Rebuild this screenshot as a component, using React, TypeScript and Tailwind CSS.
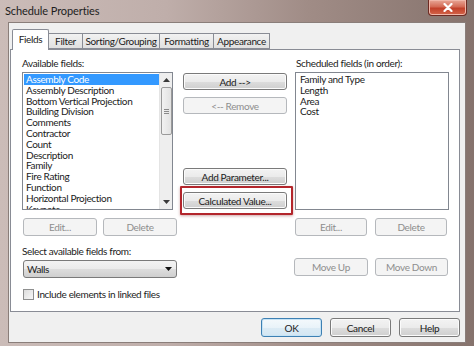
import React from 'react';

const availableFields = [
  'Assembly Code',
  'Assembly Description',
  'Bottom Vertical Projection',
  'Building Division',
  'Comments',
  'Contractor',
  'Count',
  'Description',
  'Family',
  'Fire Rating',
  'Function',
  'Horizontal Projection',
  'Keynote',
];

const scheduledFields = ['Family and Type', 'Length', 'Area', 'Cost'];

interface BtnProps {
  label: string;
  disabled?: boolean;
  primary?: boolean;
  className?: string;
}

function Btn({ label, disabled, primary, className = '' }: BtnProps) {
  const look = disabled
    ? 'border-[#b5b8bc] bg-[#f4f4f4] text-[#8e8e8e]'
    : primary
    ? 'border-[#3d80b3] bg-[linear-gradient(#f4f9fc_0%,#e9f3f9_50%,#dcebf5_51%,#d3e6f2_100%)] text-[#1b1b1b] shadow-[inset_0_0_0_1px_#c6e3f5]'
    : 'border-[#7a7a7a] bg-[linear-gradient(#f3f3f3_0%,#ebebeb_50%,#dddddd_51%,#cfcfcf_100%)] text-[#1b1b1b] shadow-[inset_0_0_0_1px_#fbfbfb]';
  return (
    <div className={`flex items-center justify-center rounded-[3px] border text-[10px] leading-none whitespace-nowrap ${look} ${className}`}>
      {label}
    </div>
  );
}

function TriUp() {
  return (
    <svg width="7" height="4" viewBox="0 0 7 4">
      <path d="M0 4 L3.5 0 L7 4 Z" fill="#3a3a3a" />
    </svg>
  );
}

function TriDown({ color = '#3a3a3a' }: { color?: string }) {
  return (
    <svg width="7" height="4" viewBox="0 0 7 4">
      <path d="M0 0 L7 0 L3.5 4 Z" fill={color} />
    </svg>
  );
}

export default function App() {
  return (
    <div className="w-[474px] h-[346px] flex flex-col overflow-hidden font-['Lato',sans-serif] tracking-[-0.35px] bg-[linear-gradient(90deg,#cbbcb8_0%,#bfaeaa_35%,#a08c86_65%,#86736d_100%)]">
      {/* Title bar */}
      <div className="h-[22px] flex items-start justify-between">
        <span className="pl-[5px] pt-[3px] text-[11px] leading-[15px] text-[#1d1d1d] tracking-[-0.1px]">
          Schedule Properties
        </span>
        <div className="mr-[7px] w-[39px] h-[16px] rounded-b-[4px] border border-t-0 border-[#6e2a22] bg-[linear-gradient(#e8a797_0%,#d46a55_45%,#c2402a_55%,#d3654a_100%)] flex items-center justify-center shadow-[inset_0_0_0_1px_#f0b6a8]">
          <svg width="10" height="9" viewBox="0 0 10 9">
            <path d="M1.5 1 L8.5 8 M8.5 1 L1.5 8" stroke="#ffffff" strokeWidth="2.2" strokeLinecap="round" />
          </svg>
        </div>
      </div>

      {/* Client area */}
      <div className="mx-[8px] mb-[3px] flex-1 flex flex-col bg-[#f0f0f0] border border-[#8a7e7a] pl-[1px] pr-[5px]">
        {/* Tabs */}
        <div className="flex items-end pl-[2px] pt-[5px] h-[26px] text-[10px] leading-none text-[#1b1b1b] whitespace-nowrap">
          <div className="relative z-10 w-[37px] h-[21px] -mb-[1px] bg-white border border-b-0 border-[#898c95] flex items-start justify-center pt-[4px] rounded-t-[2px]">
            Fields
          </div>
          <div className="w-[34px] h-[16px] bg-[linear-gradient(#f2f2f2,#e0e0e0)] border border-l-0 border-[#898c95] flex items-center justify-center">
            Filter
          </div>
          <div className="w-[77px] h-[16px] bg-[linear-gradient(#f2f2f2,#e0e0e0)] border border-l-0 border-[#898c95] flex items-center justify-center">
            Sorting/Grouping
          </div>
          <div className="w-[54px] h-[16px] bg-[linear-gradient(#f2f2f2,#e0e0e0)] border border-l-0 border-[#898c95] flex items-center justify-center">
            Formatting
          </div>
          <div className="w-[56px] h-[16px] bg-[linear-gradient(#f2f2f2,#e0e0e0)] border border-l-0 border-[#898c95] flex items-center justify-center">
            Appearance
          </div>
        </div>

        {/* Tab panel */}
        <div className="h-[263px] bg-white border border-[#898c95] flex items-start pl-[11px] pt-[7px] text-[10px] text-[#1b1b1b] whitespace-nowrap">
          {/* Left column */}
          <div className="w-[155px] flex flex-col">
            <div className="h-[12px] leading-[12px]">Available fields:</div>
            <div className="mt-[3px] w-[151px] h-[138px] border border-[#828790] flex overflow-hidden">
              <div className="flex-1 pt-[1px] pl-[1px] overflow-hidden">
                {availableFields.map((f, i) => (
                  <div
                    key={f}
                    className={`h-[10.8px] leading-[10.8px] pl-[2px] ${i === 0 ? 'bg-[#3399ff] text-white' : ''}`}
                  >
                    {f}
                  </div>
                ))}
              </div>
              <div className="w-[13px] bg-[#eeeeee] border-l border-[#e4e4e4] flex flex-col items-center">
                <div className="h-[14px] flex items-center justify-center">
                  <TriUp />
                </div>
                <div className="w-[11px] h-[48px] rounded-[2px] border border-[#9a9a9a] bg-[linear-gradient(90deg,#f2f2f2,#e2e2e2)] flex flex-col items-center justify-center gap-[1px]">
                  <div className="w-[5px] h-[1px] bg-[#8a8a8a]" />
                  <div className="w-[5px] h-[1px] bg-[#8a8a8a]" />
                  <div className="w-[5px] h-[1px] bg-[#8a8a8a]" />
                </div>
                <div className="flex-1" />
                <div className="h-[14px] flex items-center justify-center">
                  <TriDown />
                </div>
              </div>
            </div>
            <div className="mt-[8px] flex gap-[6px] pl-[1px]">
              <Btn label="Edit..." disabled className="w-[74px] h-[18px]" />
              <Btn label="Delete" disabled className="w-[74px] h-[18px]" />
            </div>
            <div className="mt-[9px] h-[12px] leading-[12px]">Select available fields from:</div>
            <div className="mt-[3px] ml-[1px] w-[154px] h-[18px] rounded-[3px] border border-[#7a7a7a] bg-[linear-gradient(#f3f3f3_0%,#ebebeb_50%,#dddddd_51%,#cfcfcf_100%)] flex items-center justify-between pl-[3px] pr-[4px]">
              <span className="leading-none">Walls</span>
              <TriDown color="#111111" />
            </div>
            <div className="mt-[11px] ml-[1px] flex items-center gap-[3px]">
              <div className="w-[11px] h-[11px] border border-[#8e8f8f] bg-[linear-gradient(135deg,#dcdcdc,#f8f8f8)]" />
              <span className="leading-[11px]">Include elements in linked files</span>
            </div>
          </div>

          {/* Middle column */}
          <div className="ml-[6px] w-[104px] flex flex-col pt-[16px]">
            <Btn label="Add -->" className="h-[17px]" />
            <Btn label="<-- Remove" disabled className="mt-[7px] h-[17px]" />
            <Btn label="Add Parameter..." className="mt-[54px] h-[17px]" />
            <div className="relative mt-[7px]">
              <Btn label="Calculated Value..." className="h-[17px]" />
              <div className="absolute -left-[3px] -right-[6px] -top-[6px] -bottom-[6px] border-2 border-[#b3262c] rounded-[1px] shadow-[0_1px_3px_rgba(120,0,0,0.35)]" />
            </div>
          </div>

          {/* Right column */}
          <div className="ml-[8px] w-[154px] flex flex-col">
            <div className="h-[12px] leading-[12px] pl-[1px]">Scheduled fields (in order):</div>
            <div className="mt-[3px] w-[154px] h-[138px] border border-[#828790] pt-[1px] pl-[4px]">
              {scheduledFields.map((f) => (
                <div key={f} className="h-[10.8px] leading-[10.8px]">
                  {f}
                </div>
              ))}
            </div>
            <div className="mt-[8px] flex gap-[8px]">
              <Btn label="Edit..." disabled className="w-[72px] h-[18px]" />
              <Btn label="Delete" disabled className="w-[72px] h-[18px]" />
            </div>
            <div className="mt-[22px] flex gap-[7px] -ml-[1px]">
              <Btn label="Move Up" disabled className="w-[74px] h-[18px]" />
              <Btn label="Move Down" disabled className="w-[73px] h-[18px]" />
            </div>
          </div>
        </div>

        {/* Dialog buttons */}
        <div className="flex justify-end gap-[8px] pt-[6px]">
          <Btn label="OK" primary className="w-[61px] h-[19px]" />
          <Btn label="Cancel" className="w-[61px] h-[19px]" />
          <Btn label="Help" className="w-[61px] h-[19px]" />
        </div>
      </div>
    </div>
  );
}
